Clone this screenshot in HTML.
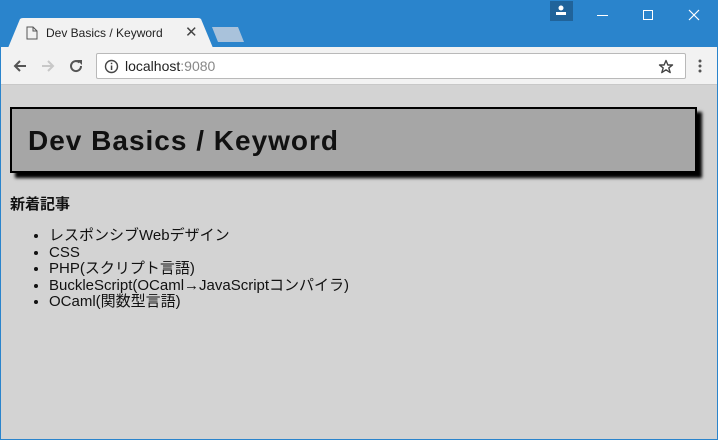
<!DOCTYPE html>
<html><head><meta charset="utf-8"><style>
*{margin:0;padding:0;box-sizing:border-box}
body{width:718px;height:440px;overflow:hidden;background:#2a84cc;position:relative;font-family:"Liberation Sans","Noto Sans CJK JP",sans-serif}
.tab{position:absolute;left:8px;top:18px;width:205px;height:30px;}
.toolbar{position:absolute;left:1px;top:47px;width:716px;height:38px;background:#f2f2f2;border-bottom:1px solid #c8c8c8}
.omni{position:absolute;left:95px;top:6px;width:590px;height:26px;background:#fff;border:1px solid #b9b9b9;border-radius:2px}
.content{position:absolute;left:1px;top:85px;width:716px;height:354px;background:#d3d3d3}
.hdr{position:absolute;left:9px;top:22px;width:687px;height:66px;background:#a6a6a6;border:2px solid #000;box-shadow:5px 5px 3px #000}
.hdr h1{position:absolute;left:16px;top:16px;font-size:28px;font-weight:bold;color:#111;letter-spacing:1px}
h2{position:absolute;left:9px;top:108px;font-size:15px;font-weight:bold;color:#111}
ul{position:absolute;left:48px;top:143px;font-size:15px;line-height:16.5px;color:#111}
</style></head><body>
<svg class="tab" viewBox="0 0 205 30"><path d="M0 30 L12 1 Q13 0 15 0 L190 0 Q192 0 193 1 L205 30Z" fill="#f2f2f2"/></svg>
<svg style="position:absolute;left:210px;top:26px" width="36" height="18"><path d="M2 1 L28 1 L34 16 L8 16Z" fill="#a9c2db"/></svg>
<svg style="position:absolute;left:26px;top:26px" width="12" height="14"><path d="M1 1 H7 L11 5 V13 H1Z M7 1 V5 H11" fill="none" stroke="#555" stroke-width="1"/></svg>
<div style="position:absolute;left:46px;top:26px;font-size:12px;color:#222">Dev Basics / Keyword</div>
<div style="position:absolute;left:185px;top:23px;font-size:15px;color:#444">✕</div>
<div style="position:absolute;left:550px;top:1px;width:23px;height:20px;background:#20639a"></div>
<svg style="position:absolute;left:555px;top:4px" width="12" height="12"><circle cx="6" cy="4" r="2.5" fill="#fff"/><rect x="1" y="8" width="10" height="3" fill="#fff"/></svg>
<div style="position:absolute;left:597px;top:15px;width:11px;height:1px;background:#fff"></div>
<div style="position:absolute;left:643px;top:10px;width:10px;height:10px;border:1px solid #fff"></div>
<svg style="position:absolute;left:688px;top:9px" width="12" height="12"><path d="M1 1L11 11M11 1L1 11" stroke="#fff" stroke-width="1.2"/></svg>
<div class="toolbar">
<svg style="position:absolute;left:11px;top:11px" width="16" height="16"><path d="M14 8H3M8 3L3 8L8 13" fill="none" stroke="#555" stroke-width="2"/></svg>
<svg style="position:absolute;left:39px;top:11px" width="16" height="16"><path d="M2 8H13M8 3L13 8L8 13" fill="none" stroke="#c8c8c8" stroke-width="2"/></svg>
<svg style="position:absolute;left:67px;top:11px" width="16" height="16"><path d="M13 8A5 5 0 1 1 11.5 4.5" fill="none" stroke="#555" stroke-width="2"/><path d="M9 2H14V7Z" fill="#555"/></svg>
<div class="omni">
<svg style="position:absolute;left:7px;top:5px" width="15" height="15"><circle cx="7.5" cy="7.5" r="6" fill="none" stroke="#444" stroke-width="1.4"/><rect x="6.8" y="6.5" width="1.5" height="4.5" fill="#444"/><rect x="6.8" y="3.7" width="1.5" height="1.5" fill="#444"/></svg>
<div style="position:absolute;left:28px;top:4px;font-size:14px;color:#222">localhost<span style="color:#888">:9080</span></div>
<svg style="position:absolute;left:561px;top:5px" width="16" height="16"><path d="M8 1.5L9.9 6H14.5L10.8 8.9L12.2 13.6L8 10.8L3.8 13.6L5.2 8.9L1.5 6H6.1Z" fill="none" stroke="#444" stroke-width="1.4" stroke-linejoin="round"/></svg>
</div>
<svg style="position:absolute;left:696px;top:11px" width="6" height="16"><circle cx="3" cy="3" r="1.5" fill="#555"/><circle cx="3" cy="8" r="1.5" fill="#555"/><circle cx="3" cy="13" r="1.5" fill="#555"/></svg>
</div>
<div class="content">
<div class="hdr"><h1>Dev Basics / Keyword</h1></div>
<h2>新着記事</h2>
<ul>
<li>レスポンシブWebデザイン</li>
<li>CSS</li>
<li>PHP(スクリプト言語)</li>
<li>BuckleScript(OCaml→JavaScriptコンパイラ)</li>
<li>OCaml(関数型言語)</li>
</ul>
</div>
</body></html>
